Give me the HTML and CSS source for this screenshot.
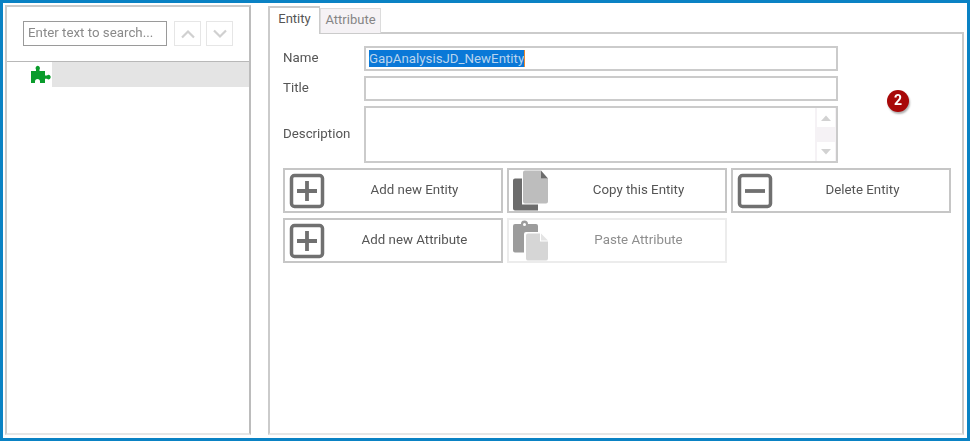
FILE: index.html
```html
<!DOCTYPE html>
<html lang="en">
<head>
<meta charset="utf-8">
<title>Entity editor</title>
<link rel="stylesheet" href="styles.css">
</head>
<body>
<div class="frame">
  <aside class="tree-pane">
    <div class="search-bar">
      <div class="search-input">Enter text to search...</div>
      <div class="nav-btn"><svg width="16" height="10" viewBox="0 0 16 10"><path d="M2 8.500 8 2.500l6 6" fill="none" stroke="#d0d0d0" stroke-width="2.200"/></svg></div>
      <div class="nav-btn"><svg width="16" height="10" viewBox="0 0 16 10"><path d="M2 1.500 8 7.500l6-6" fill="none" stroke="#d0d0d0" stroke-width="2.200"/></svg></div>
    </div>
    <div class="tree-row">
      <svg class="puzzle" width="22" height="19" viewBox="0 0 22 19"><path d="M1 6h5V4.500a2.200 2.200 0 1 1 3.500 0V6H15v4.500h2a2.200 2.200 0 1 1 0 3.200h-2V18h-5v-1.500a2.500 2.500 0 0 0-5 0V18H1z" fill="#0a9c2c"/></svg>
      <div class="tree-label"></div>
    </div>
  </aside>
  <main class="editor">
    <div class="tabs">
      <div class="tab tab-active">Entity</div>
      <div class="tab">Attribute</div>
    </div>
    <div class="tab-body">
      <div class="fields">
        <div class="field"><span class="label">Name</span><div class="box"><span class="selected">GapAnalysisJD_NewEntity</span></div></div>
        <div class="field"><span class="label">Title</span><div class="box"></div></div>
        <div class="field field-tall"><span class="label">Description</span>
          <div class="box box-tall">
            <div class="scrollbar">
              <div class="scroll-btn"><svg width="12" height="8" viewBox="0 0 12 8"><path d="M6 1.500 11 7H1z" fill="#d2d2d2"/></svg></div>
              <div class="scroll-btn"><svg width="12" height="8" viewBox="0 0 12 8"><path d="M1 1h10L6 6.500z" fill="#d2d2d2"/></svg></div>
            </div>
          </div>
        </div>
        <div class="marker">2</div>
      </div>
      <div class="actions">
        <div class="action">
          <svg class="action-icon" width="38" height="38" viewBox="0 0 38 38"><rect x="3.500" y="3.500" width="31" height="31" rx="3" fill="none" stroke="#707070" stroke-width="3.500"/><path d="M9 19h20M19 9v20" stroke="#707070" stroke-width="3.800"/></svg>
          <span>Add new Entity</span>
        </div>
        <div class="action">
          <svg class="action-icon" width="38" height="42" viewBox="0 0 38 42"><path d="M1 10.500a2 2 0 0 1 2-2h7V34.500h16v6H3a2 2 0 0 1-2-2z" fill="#6c6c6c"/><path d="M13 .5h16v8h7v23a2 2 0 0 1-2 2H13a2 2 0 0 1-2-2V2.500a2 2 0 0 1 2-2z" fill="#bdbdbd"/><path d="M29 .5l7 8h-7z" fill="#6c6c6c"/></svg>
          <span>Copy this Entity</span>
        </div>
        <div class="action">
          <svg class="action-icon" width="38" height="38" viewBox="0 0 38 38"><rect x="3.500" y="3.500" width="31" height="31" rx="3" fill="none" stroke="#707070" stroke-width="3.500"/><path d="M9 19h20" stroke="#707070" stroke-width="3.800"/></svg>
          <span>Delete Entity</span>
        </div>
        <div class="action">
          <svg class="action-icon" width="38" height="38" viewBox="0 0 38 38"><rect x="3.500" y="3.500" width="31" height="31" rx="3" fill="none" stroke="#707070" stroke-width="3.500"/><path d="M9 19h20M19 9v20" stroke="#707070" stroke-width="3.800"/></svg>
          <span>Add new Attribute</span>
        </div>
        <div class="action action-disabled">
          <svg class="action-icon" width="38" height="42" viewBox="0 0 38 42"><path d="M3 4h6a3.500 3.500 0 0 1 7 0h8a2 2 0 0 1 2 2v6H14a2 2 0 0 0-2 2v18.500H3a2 2 0 0 1-2-2V6a2 2 0 0 1 2-2z" fill="#9c9c9c"/><circle cx="12.500" cy="4.500" r="1.500" fill="#fff"/><path d="M16 13.500h12v8h8v17a2 2 0 0 1-2 2H16a2 2 0 0 1-2-2v-23a2 2 0 0 1 2-2z" fill="#d6d6d6"/><path d="M29 13.500l7 7h-7z" fill="#e4e4e4"/></svg>
          <span>Paste Attribute</span>
        </div>
      </div>
    </div>
  </main>
</div>
</body>
</html>
```
FILE: styles.css
```css
* { box-sizing: border-box; }
html, body { margin: 0; padding: 0; background: #fff; }
body { font-family: Roboto, "Liberation Sans", Arial, sans-serif; font-size: 13.300px; color: #555; }
.frame {
  width: 970px; height: 441px;
  border: 3px solid #0a82c4;
  padding: 2px 3px 3px 2px;
  display: flex;
  overflow: hidden;
  background: #fff;
}
.tree-pane {
  width: 246px;
  border: 2px solid #cbcbcb;
  border-right-color: #bcbcbc;
  border-bottom: 2px solid #e6e6e6;
  flex: none;
  filter: blur(.35px);
}
.search-bar {
  height: 55px;
  border-bottom: 1px solid #b8b8b8;
  padding: 14px 0 0 16px;
  display: flex;
  align-items: flex-start;
}
.search-input {
  width: 144px; height: 25px;
  border: 1px solid #9a9a9a;
  padding-left: 4px;
  line-height: 22px;
  color: #8a8a8a;
  white-space: nowrap;
  margin-right: 7px;
}
.nav-btn {
  width: 27px; height: 25px;
  border: 1px solid #e6e6e6;
  margin-right: 5px;
  display: flex; align-items: center; justify-content: center;
}
.tree-row { display: flex; height: 25px; padding-left: 23px; }
.puzzle { margin-top: 3px; flex: none; }
.tree-label { flex: 1; background: #e4e4e4; }
.editor {
  margin-left: 17px;
  flex: 1;
  min-width: 0;
  display: flex;
  flex-direction: column;
  filter: blur(.35px);
}
.tabs { display: flex; height: 28px; align-items: flex-end; flex: none; position: relative; z-index: 1; }
.tab {
  height: 25px;
  width: 61px;
  background: #f5f2f5;
  border: 1px solid #dcdcdc;
  border-bottom: 0;
  color: #858585;
  text-align: center;
  line-height: 22px;
  font-size: 13px;
}
.tab-active {
  height: 28px;
  width: 52px;
  background: #fff;
  border: 2px solid #cbcbcb;
  border-bottom: 0;
  border-right-width: 1px;
  color: #555;
  line-height: 22px;
  margin-bottom: -1px;
}
.tab-body {
  flex: 1;
  border-top: 2px solid #cbcbcb;
  border-left: 2px solid #cbcbcb;
  border-right: 2px solid #cbcbcb;
  border-bottom: 2px solid #e6e6e6;
  margin-top: -1px;
  padding: 12px 12px 0 13px;
}
.fields { position: relative; }
.field { display: flex; align-items: center; height: 25px; margin-bottom: 5px; }
.field-tall { height: 57px; }
.label { width: 81px; flex: none; position: relative; top: -1px; }
.box {
  width: 474px; height: 25px;
  border: 2px solid #cbcbcb;
  padding: 2px 0 0 3px;
  line-height: 17px;
  white-space: nowrap;
  flex: none;
}
.box-tall { height: 57px; padding: 0; display: flex; justify-content: flex-end; }
.selected {
  display: inline-block;
  background: #0a78d7;
  color: #b9d4ee;
  border-right: 1px solid #e8862e;
  height: 17px;
}
.scrollbar {
  width: 21px;
  background: #f5f2f5;
  display: flex;
  flex-direction: column;
  justify-content: space-between;
}
.scroll-btn {
  height: 19px; width: 18px;
  margin: 0 auto;
  background: #fff;
  display: flex; align-items: center; justify-content: center;
}
.marker {
  position: absolute;
  left: 604px; top: 44px;
  width: 22px; height: 22px;
  border-radius: 50%;
  background: #a80808;
  color: #fff;
  font-weight: 700;
  font-size: 14px;
  line-height: 21px;
  text-align: center;
  box-shadow: 1px 2px 2px #b0b0b0;
}
.actions {
  display: grid;
  grid-template-columns: repeat(3, 220px);
  grid-auto-rows: 45px;
  column-gap: 4px;
  row-gap: 5px;
}
.action {
  border: 2px solid #c6c6c6;
  display: flex;
  align-items: center;
  padding-left: 3px;
}
.action span { flex: 1; text-align: center; padding-left: 2px; padding-bottom: 2px; }
.action-icon { flex: none; }
.action-disabled { border-color: #ececec; color: #8e8e8e; }
```
